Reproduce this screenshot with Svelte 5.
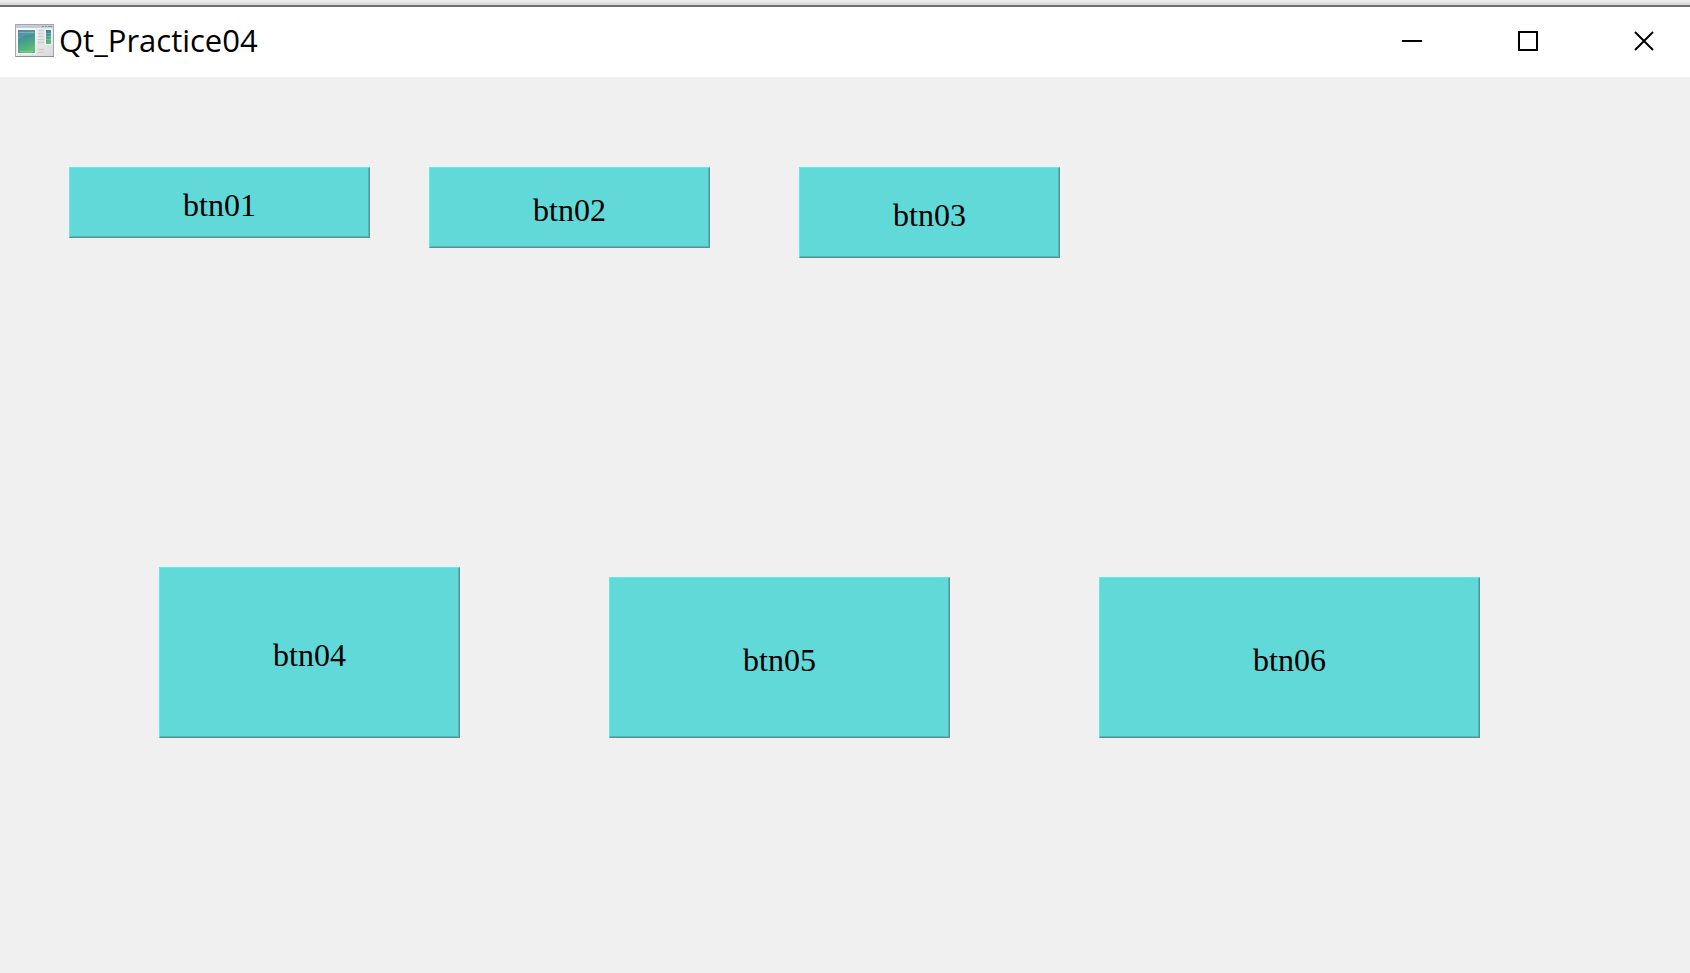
<script lang="ts">
	type FormButton = {
		label: string;
		width: number;
		height: number;
	};

	const topRow: FormButton[] = [
		{ label: 'btn01', width: 301, height: 71 },
		{ label: 'btn02', width: 281, height: 81 },
		{ label: 'btn03', width: 261, height: 91 }
	];

	const bottomRow: FormButton[] = [
		{ label: 'btn04', width: 301, height: 171 },
		{ label: 'btn05', width: 341, height: 161 },
		{ label: 'btn06', width: 381, height: 161 }
	];
</script>

<div class="window">
	<header class="titlebar">
		<svg class="app-icon" width="40" height="34" viewBox="0 0 40 34" aria-hidden="true">
			<defs>
				<linearGradient id="pane" x1="0" y1="0" x2="0.3" y2="1">
					<stop offset="0" stop-color="#3f79a8" />
					<stop offset="0.5" stop-color="#449992" />
					<stop offset="1" stop-color="#5fbd72" />
				</linearGradient>
				<linearGradient id="frame" x1="0" y1="0" x2="1" y2="1">
					<stop offset="0" stop-color="#ffffff" />
					<stop offset="1" stop-color="#d9d9db" />
				</linearGradient>
			</defs>
			<rect x="0.5" y="0.5" width="38" height="32" fill="url(#frame)" stroke="#a5a8ab" />
			<rect x="1" y="1" width="37" height="3" fill="#c3ccd4" />
			<path d="M27 2.5h2m1 0h2m1 0h4" stroke="#8d959d" />
			<path d="M1 32.5h38" stroke="#8f9295" />
			<rect x="2" y="5" width="19" height="25" fill="#f8fafb" />
			<rect x="3" y="6" width="17" height="23" fill="url(#pane)" />
			<path d="M3 16Q9 10 20 10V6H3Z" fill="#ffffff" opacity="0.1" />
			<path d="M4 8.5h15M5 27.5h13" stroke="#b8ddd0" opacity="0.4" />
			<path
				d="M23 6.5h6M23 9.5h6M23 12.5h6M23 15.5h6M23 18.5h6M23 25.5h6M23 28.5h6"
				stroke="#c6c8ca"
			/>
			<path d="M23 5h6v16h-6zM23 24h6v5h-6z" fill="#d8d8da" opacity="0.4" />
			<rect x="30" y="5" width="7" height="16" fill="#eff2f3" />
			<rect x="31" y="6" width="5" height="14" fill="url(#pane)" />
			<path d="M31 9.5h5M31 12.5h5M31 15.5h5" stroke="#91c5cf" opacity="0.5" />
		</svg>
		<h1>Qt_Practice04</h1>
		<div class="controls">
			<button aria-label="Minimize">
				<svg width="20" height="20" viewBox="0 0 20 20" aria-hidden="true">
					<path d="M0 10h20" />
				</svg>
			</button>
			<button aria-label="Maximize">
				<svg width="20" height="20" viewBox="0 0 20 20" aria-hidden="true">
					<path d="M1 1h18v18H1z" />
				</svg>
			</button>
			<button aria-label="Close">
				<svg width="20" height="20" viewBox="0 0 20 20" aria-hidden="true">
					<path d="M1 1l18 18M19 1L1 19" />
				</svg>
			</button>
		</div>
	</header>

	<main>
		<div class="row top">
			{#each topRow as button}
				<button class="push" style="width: {button.width}px; height: {button.height}px">
					{button.label}
				</button>
			{/each}
		</div>
		<div class="row bottom">
			{#each bottomRow as button}
				<button class="push" style="width: {button.width}px; height: {button.height}px">
					{button.label}
				</button>
			{/each}
		</div>
	</main>
</div>

<style>
	:global(body) {
		margin: 0;
		background: #f0f0f0;
	}
	.window {
		display: flex;
		flex-direction: column;
		box-sizing: border-box;
		min-height: 100vh;
		padding-top: 5px;
		background: linear-gradient(#f0f0f0, #d4d4d4 5px, #f0f0f0 5px);
	}
	.titlebar {
		display: flex;
		align-items: center;
		height: 68px;
		padding: 0 0 2px 15px;
		border-top: 2px solid #707070;
		background: #fff;
	}
	.app-icon {
		flex: none;
		margin-right: 4px;
	}
	h1 {
		margin: 0;
		padding-bottom: 2px;
		font: 400 31px/40px 'Open Sans', 'Noto Sans', sans-serif;
		color: #000;
	}
	.controls {
		display: flex;
		gap: 24px;
		height: 100%;
		margin-left: auto;
	}
	.controls button {
		display: flex;
		align-items: center;
		justify-content: center;
		width: 92px;
		padding: 0;
		border: 0;
		background: none;
	}
	.controls path {
		fill: none;
		stroke: #000;
		stroke-width: 2;
	}
	main {
		display: flex;
		flex-direction: column;
		flex: 1;
		gap: 309px;
		padding-top: 90px;
		background: #f0f0f0;
	}
	.row {
		display: flex;
	}
	.top {
		align-items: flex-start;
		padding-left: 69px;
	}
	.top .push:nth-child(2) {
		margin-left: 59px;
	}
	.top .push:nth-child(3) {
		margin-left: 89px;
	}
	.bottom {
		align-items: flex-end;
		gap: 149px;
		padding-left: 159px;
	}
	.push {
		flex: none;
		padding: 4px 0 0;
		border: 1px solid;
		border-color: #60eaea #5b8f90 #5b8f90 #60eaea;
		background: #60d9d8;
		box-shadow: inset -1px -1px #58b5b6;
		font: 32px/36px 'Liberation Serif', serif;
		color: #000;
	}
</style>
